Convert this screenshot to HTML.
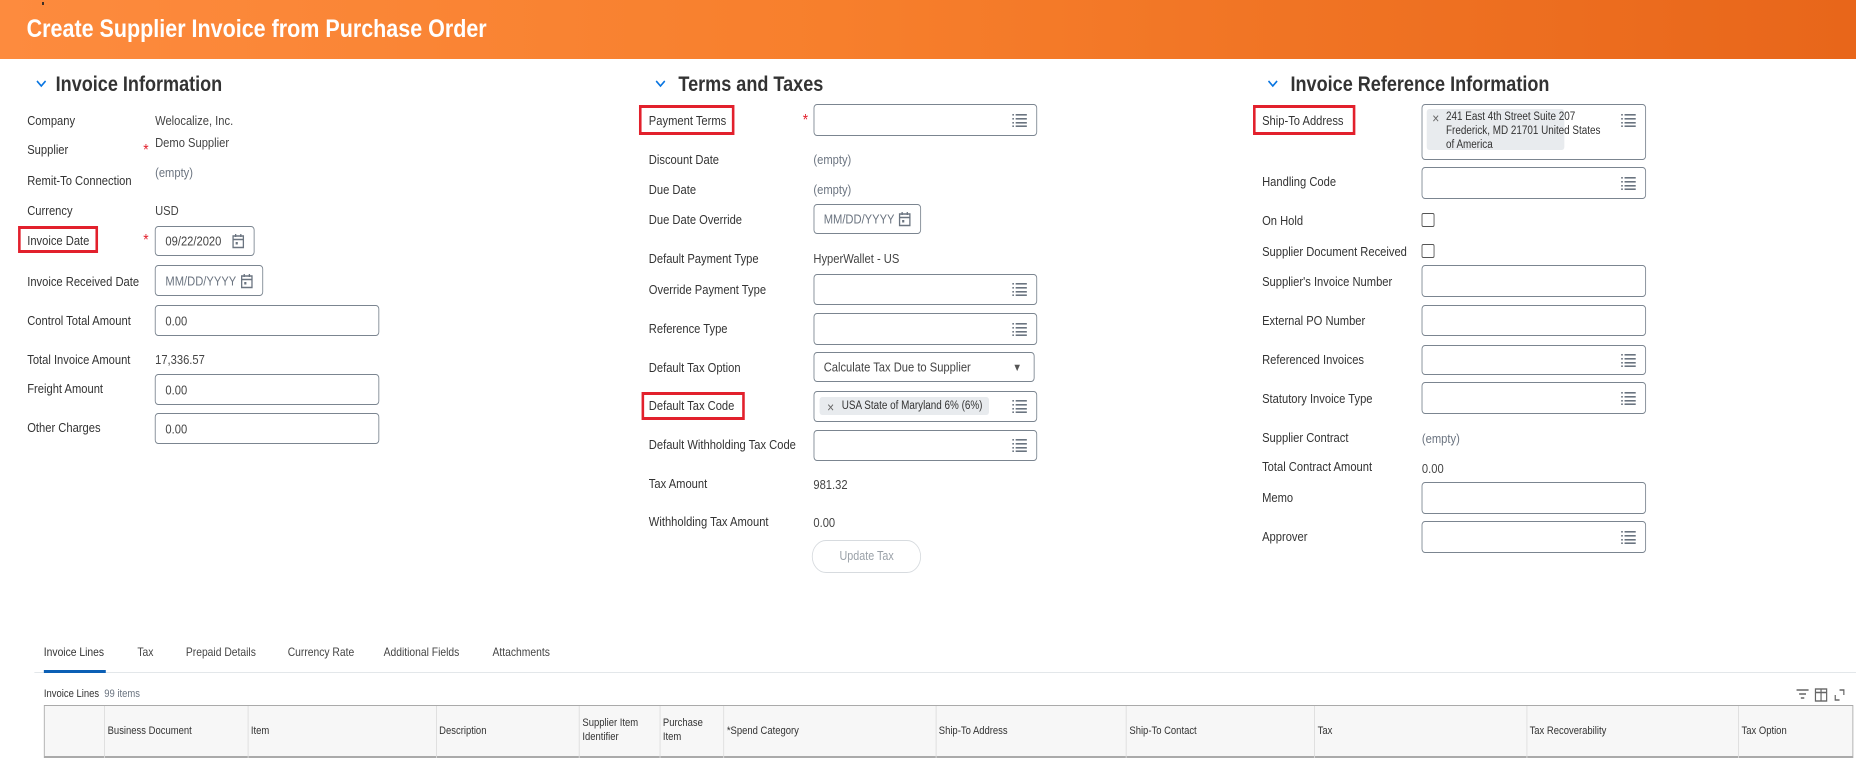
<!DOCTYPE html>
<html><head><meta charset="utf-8">
<style>
html,body{margin:0;padding:0;width:1856px;height:760px;overflow:hidden;background:#fff}
#w{position:absolute;left:0;top:0;width:2159px;height:760px;transform:scaleX(0.86);transform-origin:0 0;font-family:"Liberation Sans",Arial,sans-serif;color:#333}
.a{position:absolute;left:calc(var(--x)*1.3767px);top:calc(var(--y)*1.184px - 7px);font-size:13px;line-height:16px;color:#333;white-space:nowrap}
.v{color:#444}
.e{color:#6b7480}
.b{position:absolute;left:calc(var(--x)*1.3767px);top:calc(var(--y)*1.184px);width:calc(var(--w)*1.3767px);height:calc(var(--h)*1.184px);border:1px solid #7b8590;border-radius:4px;box-sizing:border-box;font-size:13px;color:#444}
.r{position:absolute;left:calc(var(--x)*1.3767px);top:calc(var(--y)*1.184px);width:calc(var(--w)*1.3767px);height:calc(var(--h)*1.184px);border:3px solid #e2202c;box-sizing:border-box}
.t{position:absolute;left:11px;top:50%;transform:translateY(-50%);white-space:nowrap}
.ic{position:absolute;right:10px;top:50%;margin-top:-7px;width:18px;height:14px}
.star{position:absolute;left:calc(var(--x)*1.3767px);top:calc(var(--y)*1.184px - 8px);color:#e2202c;font-size:16px}
.h{position:absolute;left:calc(var(--x)*1.3767px);top:calc(var(--y)*1.184px - 13px);font-size:21px;line-height:26px;font-weight:bold;color:#333}
.ch{position:absolute;left:calc(var(--x)*1.3767px);top:calc(var(--y)*1.184px - 6px);width:14px;height:10px}
.pill{position:absolute;left:6px;top:50%;transform:translateY(-50%);background:#e8ebee;border-radius:3px;padding:3px 8px 3px 26px;font-size:11.5px;color:#333;white-space:nowrap}
.pill:before{content:"\00d7";position:absolute;left:9px;top:2px;font-size:14px;color:#666}
.cb{position:absolute;left:calc(var(--x)*1.3767px);top:calc(var(--y)*1.184px);width:15px;height:14px;border:1px solid #555;border-radius:2px;box-sizing:border-box}
.tab{position:absolute;top:645px;font-size:12px;color:#444;left:calc(var(--x)*1.3767px)}
.col{position:absolute;top:706px;height:52px;border-left:1px solid #ddd;left:calc(var(--x)*1.3767px)}
.th{position:absolute;font-size:11px;color:#333;left:calc(var(--x)*1.3767px + 4px);top:722px;line-height:14px}
</style></head><body><div id="w">
<svg width="0" height="0" style="position:absolute"><defs>
<symbol id="li" viewBox="0 0 18 14"><g fill="#6a7480"><rect x="0" y="1" width="2" height="1.6"/><rect x="4" y="1" width="13" height="1.6"/><rect x="0" y="5" width="2" height="1.6"/><rect x="4" y="5" width="13" height="1.6"/><rect x="0" y="9" width="2" height="1.6"/><rect x="4" y="9" width="13" height="1.6"/><rect x="0" y="12.4" width="2" height="1.6"/><rect x="4" y="12.4" width="13" height="1.6"/></g></symbol>
<symbol id="cal" viewBox="0 0 16 16"><g fill="none" stroke="#6a7480" stroke-width="1.5"><rect x="2" y="3" width="12" height="11.5"/><line x1="2" y1="6.5" x2="14" y2="6.5"/><line x1="5" y1="1" x2="5" y2="4"/><line x1="11" y1="1" x2="11" y2="4"/></g><rect x="5" y="9" width="2.5" height="2.5" fill="#6a7480"/></symbol>
<symbol id="chev" viewBox="0 0 14 10"><path d="M2 2 L7 7 L12 2" fill="none" stroke="#0875e1" stroke-width="1.8"/></symbol>
</defs></svg>

<div style="position:absolute;left:0;top:0;width:2159px;height:59px;background:linear-gradient(90deg,#fd8b3e 0%,#f77f2c 45%,#e8661a 100%)"></div>
<div style="position:absolute;left:31px;top:14px;font-size:25px;font-weight:bold;color:#fff;line-height:30px">Create Supplier Invoice from Purchase Order</div>
<div style="position:absolute;left:49px;top:2px;width:2px;height:3px;background:#222"></div>

<!-- Section 1 -->
<svg class="ch" style="--x:30;--y:72"><use href="#chev"/></svg>
<div class="h" style="--x:47;--y:72">Invoice Information</div>
<div class="a" style="--x:23;--y:101">Company</div><div class="a v" style="--x:131;--y:101">Welocalize, Inc.</div>
<div class="a" style="--x:23;--y:126">Supplier</div><div class="star" style="--x:121;--y:127">*</div><div class="a v" style="--x:131;--y:120">Demo Supplier</div>
<div class="a" style="--x:23;--y:152">Remit-To Connection</div><div class="a e" style="--x:131;--y:145">(empty)</div>
<div class="a" style="--x:23;--y:177">Currency</div><div class="a v" style="--x:131;--y:177">USD</div>
<div class="a" style="--x:23;--y:203">Invoice Date</div><div class="r" style="--x:15;--y:191;--w:68;--h:23"></div><div class="star" style="--x:121;--y:203">*</div>
<div class="b" style="--x:131;--y:191;--w:84;--h:25"><span class="t">09/22/2020</span><svg class="ic" style="width:16px;height:16px;margin-top:-8px"><use href="#cal"/></svg></div>
<div class="a" style="--x:23;--y:237">Invoice Received Date</div>
<div class="b" style="--x:131;--y:224;--w:91;--h:26"><span class="t e">MM/DD/YYYY</span><svg class="ic" style="width:16px;height:16px;margin-top:-8px"><use href="#cal"/></svg></div>
<div class="a" style="--x:23;--y:270">Control Total Amount</div>
<div class="b" style="--x:131;--y:258;--w:189;--h:26"><span class="t">0.00</span></div>
<div class="a" style="--x:23;--y:303">Total Invoice Amount</div><div class="a v" style="--x:131;--y:303">17,336.57</div>
<div class="a" style="--x:23;--y:328">Freight Amount</div>
<div class="b" style="--x:131;--y:316;--w:189;--h:26"><span class="t">0.00</span></div>
<div class="a" style="--x:23;--y:361">Other Charges</div>
<div class="b" style="--x:131;--y:349;--w:189;--h:26"><span class="t">0.00</span></div>

<!-- Section 2 -->
<svg class="ch" style="--x:553;--y:72"><use href="#chev"/></svg>
<div class="h" style="--x:573;--y:72">Terms and Taxes</div>
<div class="a" style="--x:548;--y:101">Payment Terms</div><div class="r" style="--x:540;--y:89;--w:80;--h:25"></div><div class="star" style="--x:678;--y:101">*</div>
<div class="b" style="--x:687;--y:88;--w:189;--h:27"><svg class="ic"><use href="#li"/></svg></div>
<div class="a" style="--x:548;--y:134">Discount Date</div><div class="a e" style="--x:687;--y:134">(empty)</div>
<div class="a" style="--x:548;--y:160">Due Date</div><div class="a e" style="--x:687;--y:160">(empty)</div>
<div class="a" style="--x:548;--y:185">Due Date Override</div>
<div class="b" style="--x:687;--y:172;--w:91;--h:26"><span class="t e">MM/DD/YYYY</span><svg class="ic" style="width:16px;height:16px;margin-top:-8px"><use href="#cal"/></svg></div>
<div class="a" style="--x:548;--y:218">Default Payment Type</div><div class="a v" style="--x:687;--y:218">HyperWallet - US</div>
<div class="a" style="--x:548;--y:244">Override Payment Type</div>
<div class="b" style="--x:687;--y:231;--w:189;--h:27"><svg class="ic"><use href="#li"/></svg></div>
<div class="a" style="--x:548;--y:277">Reference Type</div>
<div class="b" style="--x:687;--y:264;--w:189;--h:27"><svg class="ic"><use href="#li"/></svg></div>
<div class="a" style="--x:548;--y:310">Default Tax Option</div>
<div class="b" style="--x:687;--y:297;--w:187;--h:26"><span class="t">Calculate Tax Due to Supplier</span><span style="position:absolute;right:14px;top:9px;font-size:11px;color:#555">&#9660;</span></div>
<div class="a" style="--x:548;--y:342">Default Tax Code</div><div class="r" style="--x:542;--y:331;--w:87;--h:24"></div>
<div class="b" style="--x:687;--y:330;--w:189;--h:26"><span class="pill">USA State of Maryland 6% (6%)</span><svg class="ic"><use href="#li"/></svg></div>
<div class="a" style="--x:548;--y:375">Default Withholding Tax Code</div>
<div class="b" style="--x:687;--y:363;--w:189;--h:26"><svg class="ic"><use href="#li"/></svg></div>
<div class="a" style="--x:548;--y:408">Tax Amount</div><div class="a v" style="--x:687;--y:409">981.32</div>
<div class="a" style="--x:548;--y:440">Withholding Tax Amount</div><div class="a v" style="--x:687;--y:441">0.00</div>
<div class="b" style="--x:686;--y:456;--w:92;--h:28;border-color:#d7dbdf;border-radius:17px"><span class="t" style="left:0;right:0;text-align:center;color:#9aa1a8;font-size:12.5px">Update Tax</span></div>

<!-- Section 3 -->
<svg class="ch" style="--x:1070;--y:72"><use href="#chev"/></svg>
<div class="h" style="--x:1090;--y:72">Invoice Reference Information</div>
<div class="a" style="--x:1066;--y:101">Ship-To Address</div><div class="r" style="--x:1058;--y:89;--w:87;--h:25"></div>
<div class="b" style="--x:1201;--y:88;--w:189;--h:47"><div style="position:absolute;left:5px;top:4px;width:160px;height:41px;background:#e8ebee;border-radius:3px"></div><div style="position:absolute;left:11px;top:5px;font-size:14px;color:#666">&#215;</div><div style="position:absolute;left:27px;top:5px;font-size:11.5px;line-height:14px;color:#333">241 East 4th Street Suite 207<br>Frederick, MD 21701 United States<br>of America</div><svg class="ic" style="top:8px;margin-top:0"><use href="#li"/></svg></div>
<div class="a" style="--x:1066;--y:153">Handling Code</div>
<div class="b" style="--x:1201;--y:141;--w:189;--h:27"><svg class="ic"><use href="#li"/></svg></div>
<div class="a" style="--x:1066;--y:186">On Hold</div><div class="cb" style="--x:1201;--y:180"></div>
<div class="a" style="--x:1066;--y:212">Supplier Document Received</div><div class="cb" style="--x:1201;--y:206"></div>
<div class="a" style="--x:1066;--y:237">Supplier's Invoice Number</div>
<div class="b" style="--x:1201;--y:224;--w:189;--h:27"></div>
<div class="a" style="--x:1066;--y:270">External PO Number</div>
<div class="b" style="--x:1201;--y:258;--w:189;--h:26"></div>
<div class="a" style="--x:1066;--y:303">Referenced Invoices</div>
<div class="b" style="--x:1201;--y:291;--w:189;--h:26"><svg class="ic"><use href="#li"/></svg></div>
<div class="a" style="--x:1066;--y:336">Statutory Invoice Type</div>
<div class="b" style="--x:1201;--y:323;--w:189;--h:27"><svg class="ic"><use href="#li"/></svg></div>
<div class="a" style="--x:1066;--y:369">Supplier Contract</div><div class="a e" style="--x:1201;--y:370">(empty)</div>
<div class="a" style="--x:1066;--y:394">Total Contract Amount</div><div class="a v" style="--x:1201;--y:395">0.00</div>
<div class="a" style="--x:1066;--y:420">Memo</div>
<div class="b" style="--x:1201;--y:407;--w:189;--h:27"></div>
<div class="a" style="--x:1066;--y:453">Approver</div>
<div class="b" style="--x:1201;--y:440;--w:189;--h:27"><svg class="ic"><use href="#li"/></svg></div>

<!-- Tabs -->
<div class="tab" style="--x:37;color:#333">Invoice Lines</div>
<div class="tab" style="--x:116">Tax</div>
<div class="tab" style="--x:157">Prepaid Details</div>
<div class="tab" style="--x:243">Currency Rate</div>
<div class="tab" style="--x:324">Additional Fields</div>
<div class="tab" style="--x:416">Attachments</div>
<div style="position:absolute;left:40px;top:672px;width:2119px;height:1px;background:#e3e7ea"></div>
<div style="position:absolute;left:51px;top:670px;width:72px;height:3px;background:#0b5fb5"></div>
<div style="position:absolute;left:51px;top:688px;font-size:11px;color:#333">Invoice Lines <span style="color:#6b7480;margin-left:3px">99 items</span></div>
<svg style="position:absolute;left:2088px;top:687px" width="70" height="16" viewBox="0 0 70 16"><g stroke="#666" stroke-width="1.4" fill="none"><line x1="1" y1="3" x2="15" y2="3"/><line x1="4" y1="7" x2="12" y2="7"/><line x1="6" y1="11" x2="10" y2="11"/><rect x="23" y="2" width="13" height="12"/><line x1="29.5" y1="2" x2="29.5" y2="14"/><line x1="23" y1="5.5" x2="36" y2="5.5"/><path d="M46 8 V13 H51 M51 3 H56 V8"/></g></svg>
<!-- table -->
<div style="position:absolute;left:51px;top:705px;width:2104px;background:#f7f7f7;border:1px solid #aaa;border-bottom:2px solid #aaa;box-sizing:border-box;height:53px"></div>
<div class="col" style="--x:88"></div><div class="col" style="--x:209"></div><div class="col" style="--x:368"></div><div class="col" style="--x:489"></div><div class="col" style="--x:557"></div><div class="col" style="--x:611"></div><div class="col" style="--x:790"></div><div class="col" style="--x:951"></div><div class="col" style="--x:1110"></div><div class="col" style="--x:1289"></div><div class="col" style="--x:1468"></div>
<div class="th" style="--x:88;top:724px">Business Document</div>
<div class="th" style="--x:209;top:724px">Item</div>
<div class="th" style="--x:368;top:724px">Description</div>
<div class="th" style="--x:489;top:716px">Supplier Item<br>Identifier</div>
<div class="th" style="--x:557;top:716px">Purchase<br>Item</div>
<div class="th" style="--x:611;top:724px">*Spend Category</div>
<div class="th" style="--x:790;top:724px">Ship-To Address</div>
<div class="th" style="--x:951;top:724px">Ship-To Contact</div>
<div class="th" style="--x:1110;top:724px">Tax</div>
<div class="th" style="--x:1289;top:724px">Tax Recoverability</div>
<div class="th" style="--x:1468;top:724px">Tax Option</div>
</div></body></html>
